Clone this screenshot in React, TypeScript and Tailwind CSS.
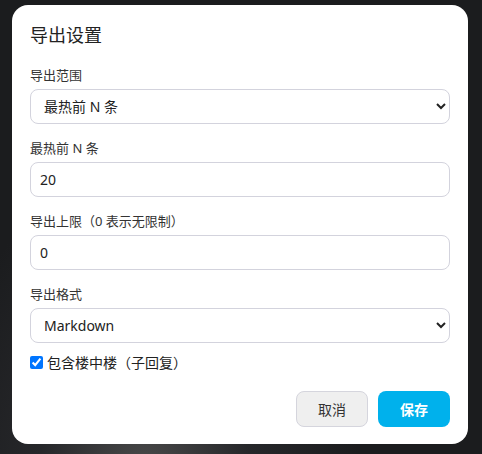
import { useState } from 'react';

const font = { fontFamily: '"Noto Sans", "Noto Sans CJK SC", sans-serif' };

function Field({ label, children }: { label: string; children: React.ReactNode }) {
  return (
    <div className="flex flex-col mb-[14px]">
      <label className="text-[13px] leading-5 text-[#333] mb-[4px]">{label}</label>
      {children}
    </div>
  );
}

export default function App() {
  const [range, setRange] = useState('top');
  const [topN, setTopN] = useState('20');
  const [limit, setLimit] = useState('0');
  const [format, setFormat] = useState('md');
  const [nested, setNested] = useState(true);

  const boxCls =
    'h-[35px] w-full rounded-lg border border-[#d3d3dd] bg-white px-[9px] text-[14px] text-[#222] outline-none';

  return (
    <div
      style={font}
      className="w-[482px] h-[454px] overflow-hidden bg-[#1b1c1e] bg-[radial-gradient(ellipse_at_30%_105%,#4a4a4a_0%,#26272a_22%,#1b1c1e_45%)] pl-3 pt-[5px]"
    >
      <div className="w-[456px] h-[439px] rounded-2xl bg-white px-[18px] pt-[17px] pb-[17px] flex flex-col">
        <h2 className="text-[18px] leading-[26px] text-[#222] mb-[17px]">导出设置</h2>

        <Field label="导出范围">
          <select className={boxCls} value={range} onChange={(e) => setRange(e.target.value)}>
            <option value="top">最热前 N 条</option>
            <option value="all">全部</option>
          </select>
        </Field>

        <Field label="最热前 N 条">
          <input className={boxCls} value={topN} onChange={(e) => setTopN(e.target.value)} />
        </Field>

        <Field label="导出上限（0 表示无限制）">
          <input className={boxCls} value={limit} onChange={(e) => setLimit(e.target.value)} />
        </Field>

        <Field label="导出格式">
          <select className={boxCls} value={format} onChange={(e) => setFormat(e.target.value)}>
            <option value="md">Markdown</option>
            <option value="txt">纯文本</option>
          </select>
        </Field>

        <label className="flex items-center gap-1 h-5 -mt-[5px] text-[14px] text-[#222]">
          <input
            type="checkbox"
            className="w-[13px] h-[13px] m-0"
            checked={nested}
            onChange={(e) => setNested(e.target.checked)}
          />
          包含楼中楼（子回复）
        </label>

        <div className="flex justify-end gap-[10px] mt-[19px]">
          <button className="w-[72px] h-9 rounded-lg border border-[#d5d5dd] bg-[#efefef] text-[14px] text-[#333]">
            取消
          </button>
          <button className="w-[72px] h-9 rounded-lg bg-[#00b1ec] text-[14px] font-bold text-white">
            保存
          </button>
        </div>
      </div>
    </div>
  );
}
